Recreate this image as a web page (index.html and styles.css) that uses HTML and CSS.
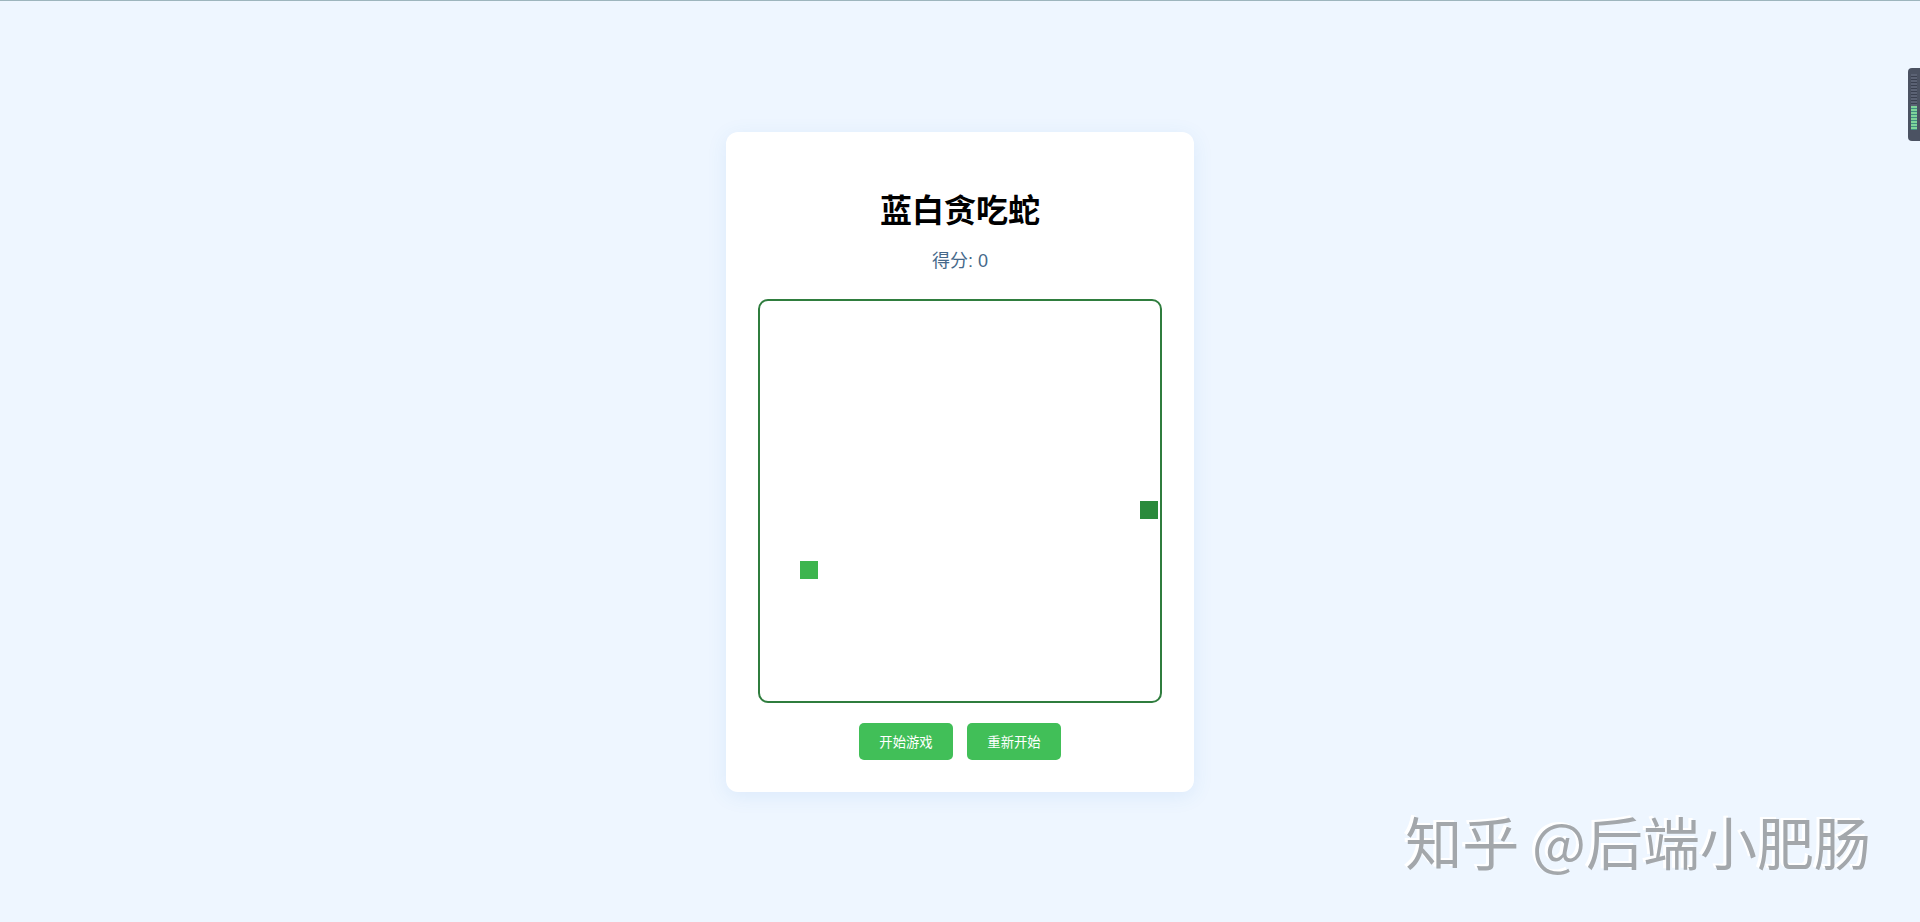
FILE: index.html
```html
<!DOCTYPE html>
<html lang="zh-CN">
<head>
<meta charset="utf-8">
<title>蓝白贪吃蛇</title>
<link rel="stylesheet" href="styles.css">
</head>
<body>
<div class="page">
  <div class="card">
    <h1 class="title">蓝白贪吃蛇</h1>
    <p class="score">得分: <span>0</span></p>
    <div class="board">
      <div class="cell head" style="left:380px;top:200px"></div>
      <div class="cell food" style="left:40px;top:260px"></div>
    </div>
    <div class="controls">
      <button class="btn">开始游戏</button>
      <button class="btn">重新开始</button>
    </div>
  </div>
  <div class="side-widget"><div class="meter"></div></div>
  <div class="watermark">知乎 @后端小肥肠</div>
</div>
</body>
</html>
```
FILE: styles.css
```css
html, body {
  margin: 0;
  padding: 0;
}
body {
  background: #eef6ff;
  font-family: "Noto Sans CJK SC", "Noto Sans", sans-serif;
}
.page {
  position: relative;
  height: 921px;
  border-top: 1px solid #9db5bd;
  display: flex;
  align-items: center;
  justify-content: center;
  overflow: hidden;
}
.card {
  width: 404px;
  padding: 32px;
  background: #ffffff;
  border-radius: 12px;
  box-shadow: 0 4px 20px rgba(60, 130, 220, 0.10);
  display: flex;
  flex-direction: column;
  align-items: center;
}
.title {
  margin: 22px 0 0;
  font-size: 32px;
  line-height: 44px;
  font-weight: 700;
  color: #000;
}
.score {
  margin: 19px 0 0;
  font-family: "Liberation Sans", "Noto Sans CJK SC", sans-serif;
  font-size: 18px;
  line-height: 24px;
  color: #45688a;
}
.board {
  position: relative;
  margin-top: 26px;
  width: 400px;
  height: 400px;
  border: 2px solid #2f7d3e;
  border-radius: 10px;
  background: #fff;
}
.cell {
  position: absolute;
  width: 18px;
  height: 18px;
}
.head {
  background: #2b8a3c;
}
.food {
  background: #3db54e;
}
.controls {
  margin-top: 20px;
  display: flex;
  gap: 14px;
}
.btn {
  width: 94px;
  height: 37px;
  border: none;
  border-radius: 5px;
  background: #41bf58;
  color: #fff;
  font-family: "Noto Sans CJK SC", sans-serif;
  font-size: 13.33px;
  padding: 0;
}
.side-widget {
  position: absolute;
  right: 0;
  top: 67px;
  width: 12px;
  height: 73px;
  background: #4b5262;
  border-radius: 4px 0 0 4px;
  padding: 6px 0 0 3px;
  box-sizing: border-box;
}
.meter {
  width: 6px;
  height: 56px;
  background: repeating-linear-gradient(to bottom, #5b6274 0 2px, #3a4050 2px 3px);
  position: relative;
}
.meter::after {
  content: "";
  position: absolute;
  left: 0;
  bottom: 0;
  width: 6px;
  height: 24px;
  background: repeating-linear-gradient(to bottom, #7fd49a 0 2px, #3f8f80 2px 3px);
}
.watermark {
  position: absolute;
  right: 49px;
  top: 801px;
  font-size: 57px;
  line-height: 76px;
  font-weight: 400;
  color: #a3a7ab;
  text-shadow: -3px -2px 0 #ffffff;
  white-space: nowrap;
}
```
